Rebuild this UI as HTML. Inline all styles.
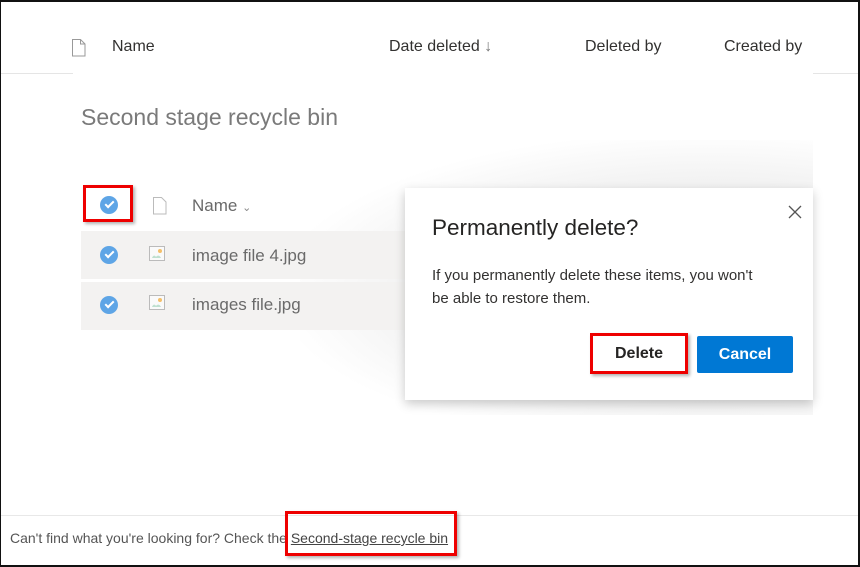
<!DOCTYPE html>
<html><head><style>
*{margin:0;padding:0;box-sizing:border-box}
body{width:860px;height:567px;position:relative;overflow:hidden;background:#fff;font-family:"Liberation Sans",sans-serif}
.frame{position:absolute;inset:0;border:2px solid #111;border-left-width:1px;z-index:50;pointer-events:none}
.abs{position:absolute}
.hdr{font-size:16px;color:#323130;top:38px}
.shade{left:300px;top:140px;width:513px;height:275px;background:radial-gradient(ellipse at 80% 55%,#d8d8d8 0%,#ececec 40%,rgba(255,255,255,0) 75%)}
.row{left:81px;width:330px;height:48px;background:#f3f2f1}
.chk{width:18px;height:18px;border-radius:50%;background:#5ea5e6;left:100px}
.chk:after{content:"";position:absolute;left:5px;top:5px;width:7px;height:3px;border-left:2px solid #fff;border-bottom:2px solid #fff;transform:rotate(-45deg)}
.red{border:3px solid #e00;box-shadow:2px 2px 3px rgba(0,0,0,.3)}
.fname{font-size:17px;color:#6a6a6a;left:192px}
</style></head><body>
<div class="frame"></div>
<div class="abs" style="left:0;top:73px;width:73px;height:1px;background:#e5e5e5"></div>
<div class="abs" style="left:813px;top:73px;width:47px;height:1px;background:#e5e5e5"></div>
<svg class="abs" style="left:71px;top:38px" width="16" height="20"><path d="M1.5 1.5h8l4.5 4.5v12h-12.5z M9.5 1.5v4.5h4.5" fill="none" stroke="#999" stroke-width="1"/></svg>
<div class="abs hdr" style="left:112px">Name</div>
<div class="abs hdr" style="left:389px">Date deleted <span style="color:#777">↓</span></div>
<div class="abs hdr" style="left:585px">Deleted by</div>
<div class="abs hdr" style="left:724px">Created by</div>
<div class="abs" style="left:81px;top:104px;font-size:23px;color:#7a7a7a">Second stage recycle bin</div>
<div class="abs shade"></div>
<div class="abs row" style="top:231px"></div>
<div class="abs row" style="top:282px"></div>
<div class="abs red" style="left:83px;top:185px;width:50px;height:37px"></div>
<div class="abs chk" style="top:196px"></div>
<div class="abs chk" style="top:246px"></div>
<div class="abs chk" style="top:296px"></div>
<svg class="abs" style="left:152px;top:196px" width="16" height="20"><path d="M1.5 1.5h8l4.5 4.5v12h-12.5z" fill="#fff" stroke="#bbb" stroke-width="1"/></svg>
<div class="abs fname" style="top:196px;font-size:17px">Name <span style="font-size:11px;color:#888">⌄</span></div>
<svg class="abs" style="left:149px;top:246px" width="17" height="16"><rect x="0.5" y="0.5" width="15" height="14" fill="#fafafa" stroke="#bbb"/><circle cx="11" cy="5" r="2" fill="#f4c06a"/><path d="M3 12c1-3 3-3 4-1 1-2 4-2 5 1z" fill="#bfe0d0"/></svg>
<svg class="abs" style="left:149px;top:295px" width="17" height="16"><rect x="0.5" y="0.5" width="15" height="14" fill="#fafafa" stroke="#bbb"/><circle cx="11" cy="5" r="2" fill="#f4c06a"/><path d="M3 12c1-3 3-3 4-1 1-2 4-2 5 1z" fill="#bfe0d0"/></svg>
<div class="abs fname" style="top:246px">image file 4.jpg</div>
<div class="abs fname" style="top:295px">images file.jpg</div>
<div class="abs" style="left:405px;top:188px;width:408px;height:212px;background:#fff;box-shadow:0 4px 10px rgba(0,0,0,.2)"></div>
<svg class="abs" style="left:788px;top:205px" width="14" height="14"><path d="M1 1L13 13M13 1L1 13" stroke="#555" stroke-width="1.3"/></svg>
<div class="abs" style="left:432px;top:215px;font-size:22.5px;color:#252423">Permanently delete?</div>
<div class="abs" style="left:432px;top:264px;font-size:15px;line-height:23px;color:#323130;width:370px">If you permanently delete these items, you won't<br>be able to restore them.</div>
<div class="abs red" style="left:590px;top:333px;width:98px;height:41px;background:#fff;font-size:16px;color:#252423;text-align:center;line-height:35px;font-weight:600">Delete</div>
<div class="abs" style="left:697px;top:336px;width:96px;height:37px;background:#0078d4;border-radius:2px;color:#fff;font-size:16px;font-weight:600;text-align:center;line-height:37px">Cancel</div>
<div class="abs" style="left:0;top:515px;width:860px;height:1px;background:#e8e8e8"></div>
<div class="abs" style="left:10px;top:530px;font-size:14px;color:#555">Can't find what you're looking for? Check the <span style="text-decoration:underline;color:#444">Second-stage recycle bin</span></div>
<div class="abs red" style="left:285px;top:511px;width:172px;height:45px"></div>
</body></html>
